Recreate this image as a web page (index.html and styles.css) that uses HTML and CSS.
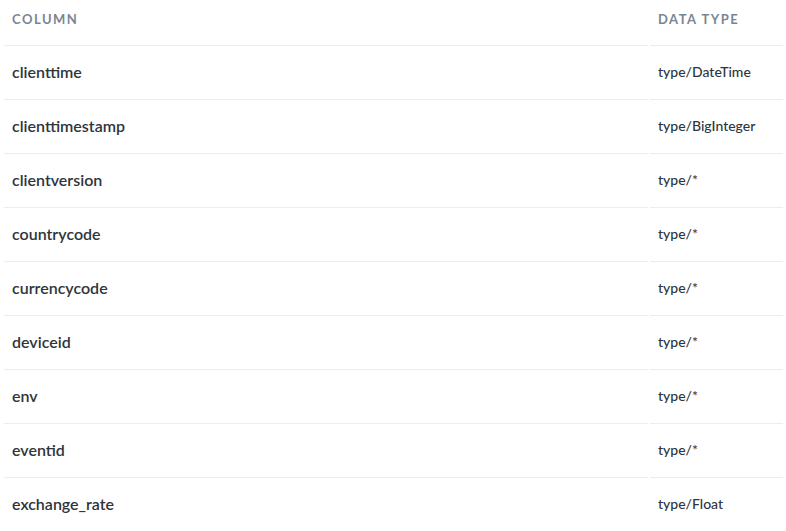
FILE: index.html
```html
<!DOCTYPE html>
<html>
<head>
<meta charset="utf-8">
<link rel="stylesheet" href="styles.css">
</head>
<body>
<table class="schema">
  <thead>
    <tr><th class="col-name">Column</th><th class="col-type">Data type</th></tr>
  </thead>
  <tbody>
    <tr><td class="name">clienttime</td><td class="type">type/DateTime</td></tr>
    <tr><td class="name">clienttimestamp</td><td class="type">type/BigInteger</td></tr>
    <tr><td class="name">clientversion</td><td class="type">type/*</td></tr>
    <tr><td class="name">countrycode</td><td class="type">type/*</td></tr>
    <tr><td class="name">currencycode</td><td class="type">type/*</td></tr>
    <tr><td class="name">deviceid</td><td class="type">type/*</td></tr>
    <tr><td class="name">env</td><td class="type">type/*</td></tr>
    <tr><td class="name">eventid</td><td class="type">type/*</td></tr>
    <tr><td class="name">exchange_rate</td><td class="type">type/Float</td></tr>
  </tbody>
</table>
</body>
</html>
```
FILE: styles.css
```css
html, body {
  margin: 0;
  padding: 0;
  background: #fff;
}
body {
  padding: 2px 0 0 2px;
  font-family: Lato, "Open Sans", sans-serif;
  color: #2e353b;
  overflow: hidden;
}
.schema {
  width: 783px;
  border-collapse: separate;
  border-spacing: 2px;
}
.schema th {
  text-align: left;
  text-transform: uppercase;
  font-size: 13px;
  font-weight: 700;
  letter-spacing: 1.5px;
  color: #7a8594;
  padding: 7px 8px 18px;
  line-height: 16px;
  border-bottom: 1px solid #ededed;
  height: 16px;
}
.schema td {
  height: 47px;
  padding: 0 8px 4px;
  border-bottom: 1px solid #ededed;
  vertical-align: middle;
}
.schema .col-type, .schema .type {
  width: 117px;
}
.name {
  font-size: 16px;
  font-weight: 600;
  color: #2e353b;
}
.type {
  font-size: 14px;
  font-weight: 500;
  color: #2e353b;
}
```
